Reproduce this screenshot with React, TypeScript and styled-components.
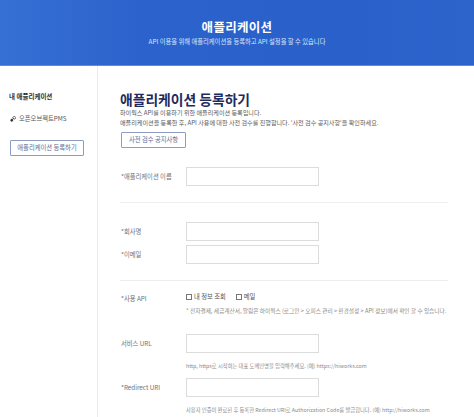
// 애플리케이션 등록 페이지
import React from 'react';
import styled, { createGlobalStyle } from 'styled-components';

const GlobalStyle = createGlobalStyle`
  html, body {
    margin: 0;
    padding: 0;
    background: #fff;
  }
  body {
    font-family: "Noto Sans CJK KR", "Noto Sans", sans-serif;
    color: #333;
  }
  * {
    box-sizing: border-box;
  }
`;

const Page = styled.div`
  width: 474px;
  min-height: 417px;
  overflow: hidden;
`;

const Header = styled.header`
  height: 66px;
  padding-top: 4px;
  background: linear-gradient(90deg, #3670d4 0%, #2b62cc 30%, #2a60c9 70%, #2d64cc 100%);
  border-bottom: 1px solid #5d8be0;
  display: flex;
  flex-direction: column;
  align-items: center;
  justify-content: center;
  color: #fff;
`;

const HeaderTitle = styled.h1`
  margin: 0 0 2px;
  font-size: 12.5px;
  line-height: 16px;
  font-weight: 700;
  letter-spacing: 0.3px;
`;

const HeaderSub = styled.p`
  margin: 0 0 4px;
  font-size: 6.3px;
  line-height: 9px;
  color: #dce6fa;
`;

const Body = styled.div`
  display: flex;
`;

const Sidebar = styled.aside`
  width: 98px;
  flex-shrink: 0;
  min-height: 351px;
  border-right: 1px solid #ececec;
  padding: 26px 0 0 9px;
`;

const SideTitle = styled.div`
  font-size: 6.5px;
  line-height: 9px;
  font-weight: 700;
  color: #333;
`;

const SideItem = styled.div`
  display: flex;
  align-items: center;
  gap: 3px;
  margin-top: 13px;
  padding-left: 1px;
  font-size: 6.3px;
  line-height: 9px;
  color: #555;
`;

const OutlineButton = styled.button`
  display: flex;
  align-items: center;
  justify-content: center;
  height: 16px;
  padding: 0;
  border: 1px solid #8e9cc4;
  border-radius: 1px;
  background: #fff;
  color: #5d6b95;
  font-family: inherit;
  font-size: 6.3px;
  line-height: 1;
  cursor: pointer;
`;

const SideButton = styled(OutlineButton)`
  margin-top: 17px;
  margin-left: 1px;
  width: 74px;
`;

const Main = styled.main`
  flex: 1;
  min-width: 0;
  padding: 24px 26px 0 22px;
`;

const Title = styled.h2`
  margin: 0;
  font-size: 13.8px;
  line-height: 18px;
  font-weight: 700;
  color: #1d2b5e;
`;

const Desc = styled.p`
  margin: 0;
  font-size: 6.1px;
  line-height: 10px;
  color: #5a5a5a;
`;

const NoticeButton = styled(OutlineButton)`
  margin: 4px 0 0 1px;
  width: 65px;
`;

const Section = styled.section<{ $top: number; $bottom: number; $gap?: number; $last?: boolean }>`
  padding: ${p => p.$top}px 0 ${p => p.$bottom}px;
  border-bottom: ${p => (p.$last ? 'none' : '1px solid #eeeeee')};
  display: flex;
  flex-direction: column;
  gap: ${p => p.$gap ?? 0}px;
`;

const Row = styled.div<{ $gap?: number; $top?: boolean }>`
  display: grid;
  grid-template-columns: 66px 1fr;
  align-items: ${p => (p.$top ? 'start' : 'center')};
  margin-top: ${p => p.$gap ?? 0}px;
`;

const Label = styled.label<{ $pad?: number }>`
  padding: ${p => p.$pad ?? 0}px 0 0 1px;
  font-size: 6.3px;
  line-height: 9px;
  font-weight: 400;
  color: #707070;
`;

const Input = styled.input`
  display: block;
  width: 133px;
  height: 19px;
  margin: 0;
  border: 1px solid #dcdcdc;
  border-radius: 0;
  padding: 0 4px;
  font-size: 7px;
  outline: none;
  background: #fff;
`;

const Hint = styled.p<{ $top?: number; $size?: number }>`
  grid-column: 2;
  margin: ${p => p.$top ?? 0}px 0 0;
  font-size: ${p => p.$size ?? 5.3}px;
  line-height: 10px;
  color: #8a8a8a;
  white-space: nowrap;
`;

const FieldStack = styled.div`
  display: flex;
  flex-direction: column;
  min-width: 0;
`;

const Checks = styled.div`
  display: flex;
  gap: 10px;
  font-size: 6.3px;
  line-height: 10px;
  color: #555;
`;

const Check = styled.label`
  display: inline-flex;
  align-items: center;
  gap: 2px;
`;

const Box = styled.span`
  width: 6px;
  height: 6px;
  border: 1px solid #777;
  background: #fff;
  display: inline-block;
`;

const LinkIcon = () => (
  <svg width="6" height="6" viewBox="0 0 12 12" fill="none">
    <path d="M5 7 L7 5" stroke="#333" strokeWidth="1.6" strokeLinecap="round" />
    <rect x="6" y="1" width="5" height="5" rx="1.5" transform="rotate(45 8.5 3.5)" stroke="#333" strokeWidth="1.6" />
    <rect x="1" y="6" width="5" height="5" rx="1.5" transform="rotate(45 3.5 8.5)" fill="#333" />
  </svg>
);

const App: React.FC = () => {
  return (
    <Page>
      <GlobalStyle />
      <Header>
        <HeaderTitle>애플리케이션</HeaderTitle>
        <HeaderSub>API 이용을 위해 애플리케이션을 등록하고 API 설정을 할 수 있습니다</HeaderSub>
      </Header>
      <Body>
        <Sidebar>
          <SideTitle>내 애플리케이션</SideTitle>
          <SideItem>
            <LinkIcon />
            오픈오브젝트PMS
          </SideItem>
          <SideButton>애플리케이션 등록하기</SideButton>
        </Sidebar>
        <Main>
          <Title>애플리케이션 등록하기</Title>
          <Desc>
            하이웍스 API를 이용하기 위한 애플리케이션 등록입니다.
            <br />
            애플리케이션을 등록한 후, API 사용에 대한 사전 검수를 진행합니다. '사전 검수 공지사항'을 확인하세요.
          </Desc>
          <NoticeButton>사전 검수 공지사항</NoticeButton>

          <Section $top={19} $bottom={16}>
            <Row>
              <Label>*애플리케이션 이름</Label>
              <Input />
            </Row>
          </Section>

          <Section $top={19} $bottom={16} $gap={4}>
            <Row>
              <Label>*회사명</Label>
              <Input />
            </Row>
            <Row>
              <Label>*이메일</Label>
              <Input />
            </Row>
          </Section>

          <Section $top={11} $bottom={0} $last>
            <Row $top>
              <Label $pad={2}>*사용 API</Label>
              <FieldStack>
                <Checks>
                  <Check><Box />내 정보 조회</Check>
                  <Check><Box />메일</Check>
                </Checks>
                <Hint $top={4} $size={5.7}>
                  * 전자결제, 세금계산서, 알림은 하이웍스 (로그인 &gt; 오피스 관리 &gt; 환경설정 &gt; API 정보)에서 확인 할 수 있습니다.
                </Hint>
              </FieldStack>
            </Row>
            <Row $gap={18}>
              <Label>서비스 URL</Label>
              <Input />
              <Hint $top={8}>http, https로 시작하는 대표 도메인명을 입력해주세요. (예) https://hiworks.com</Hint>
            </Row>
            <Row $gap={7}>
              <Label>*Redirect URI</Label>
              <Input />
              <Hint $top={8}>사용자 인증이 완료된 후 등록한 Redirect URI로 Authorization Code를 발급합니다. (예) http://hiworks.com</Hint>
            </Row>
          </Section>
        </Main>
      </Body>
    </Page>
  );
};

export default App;
